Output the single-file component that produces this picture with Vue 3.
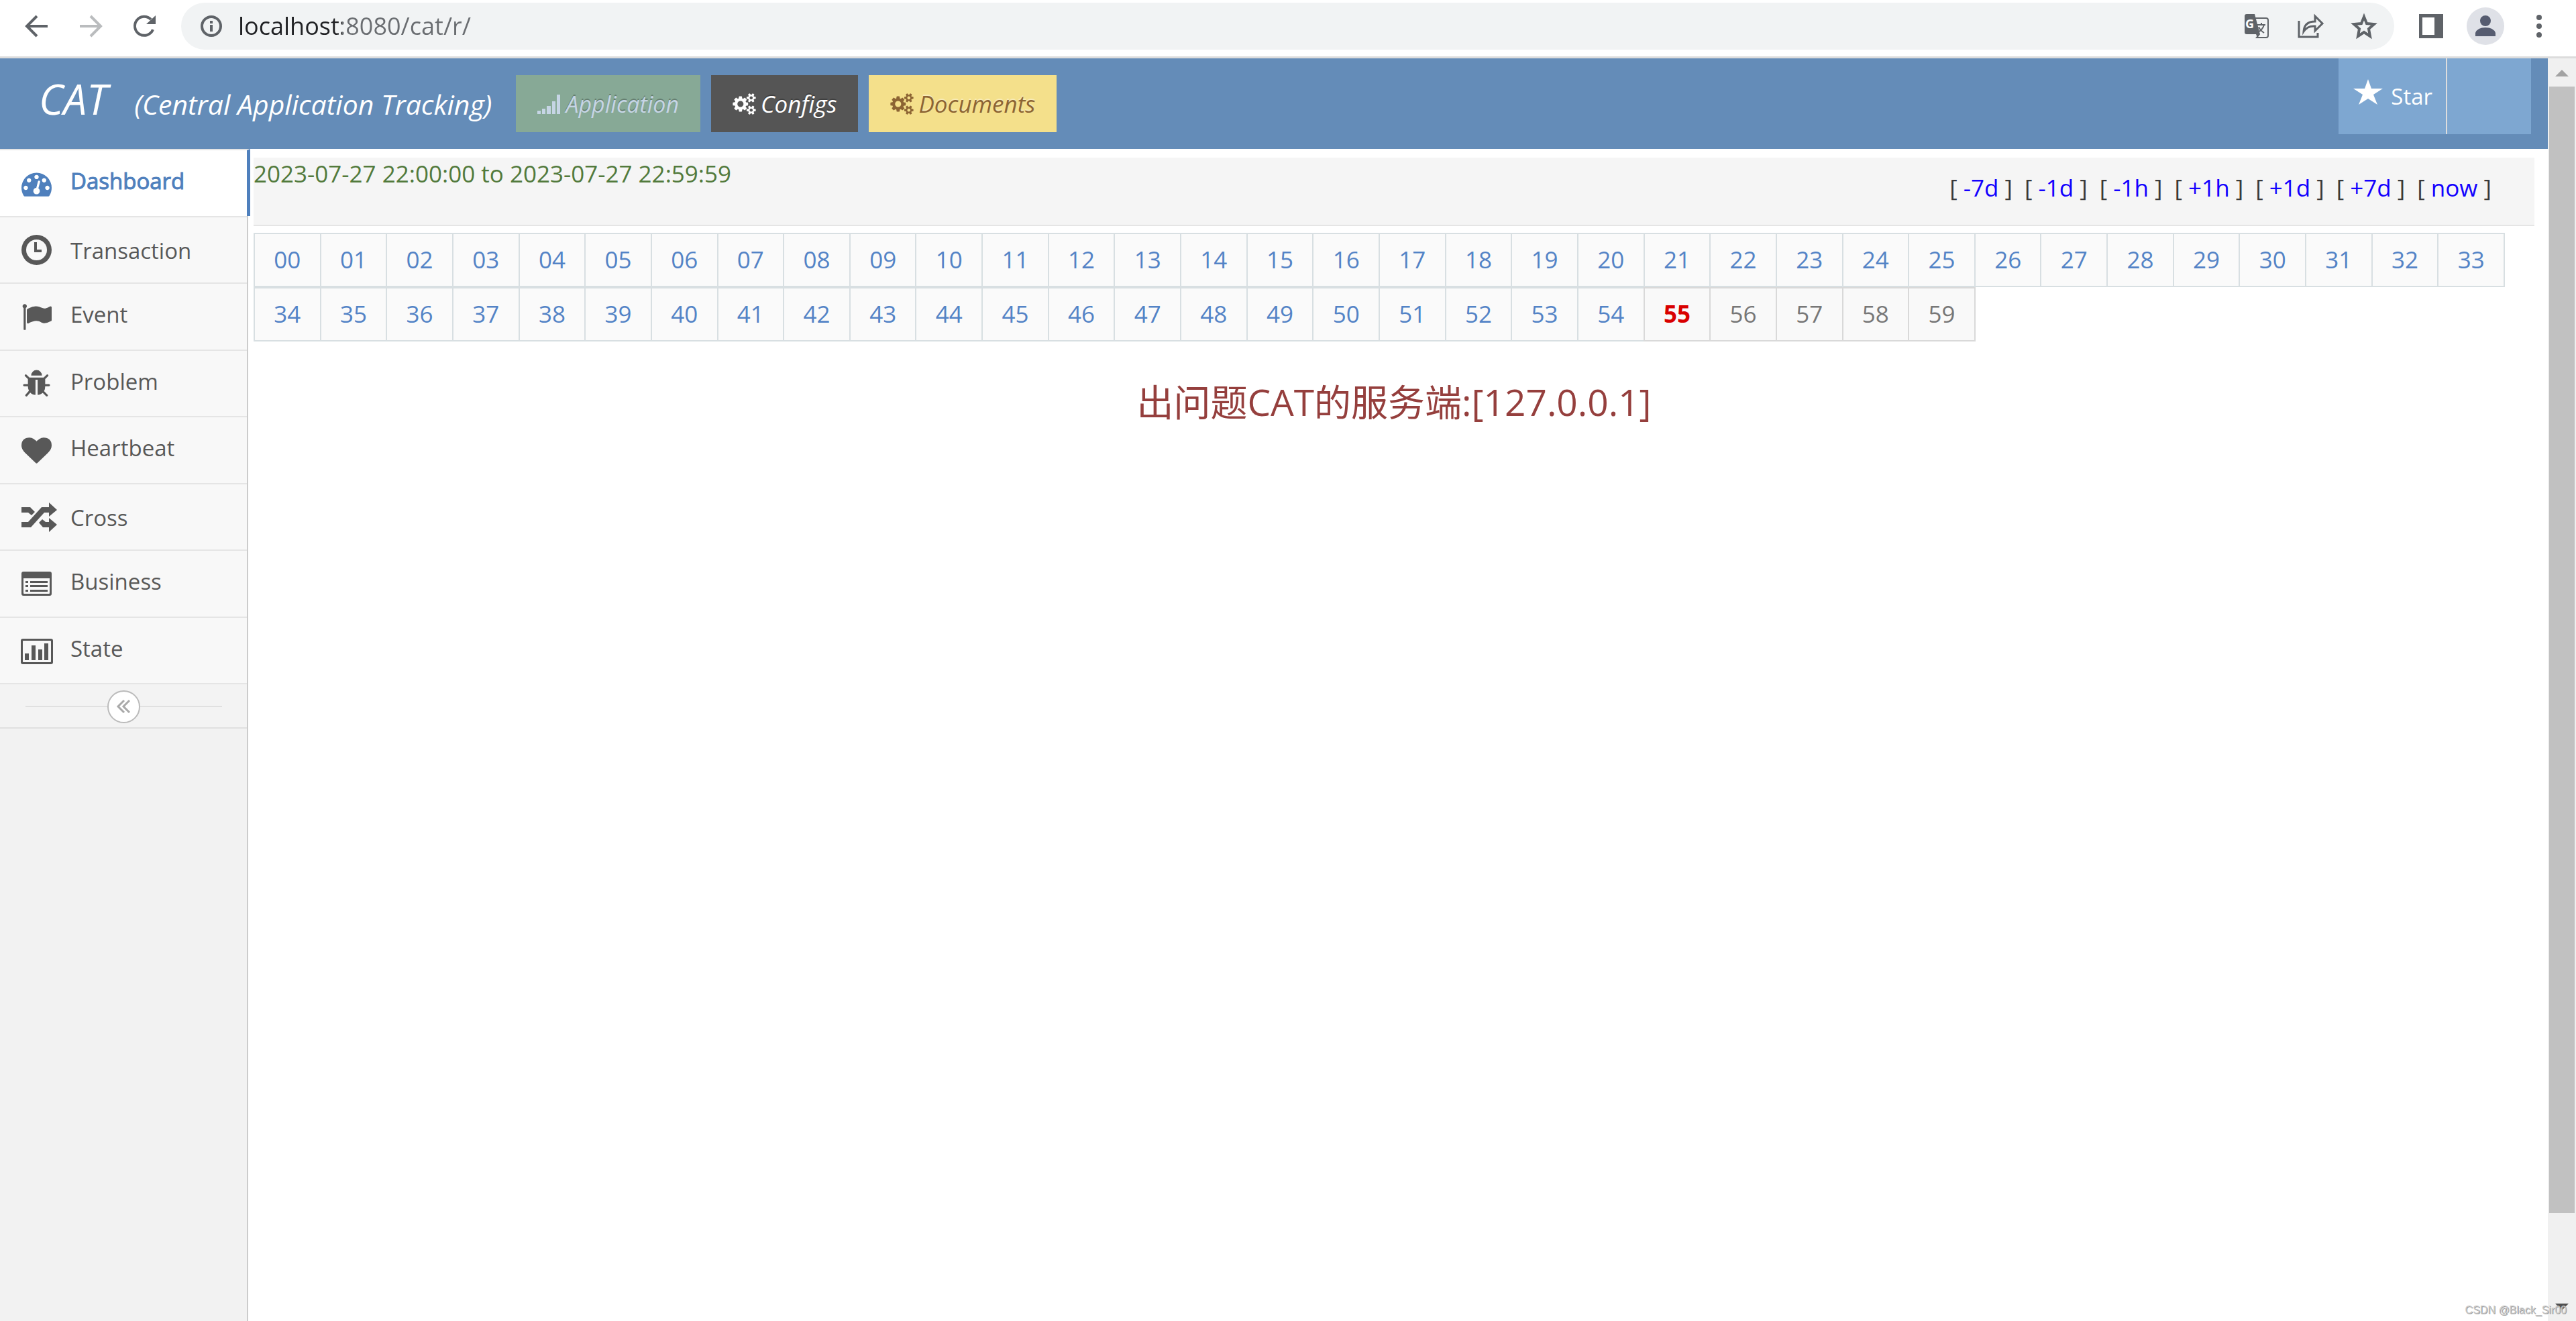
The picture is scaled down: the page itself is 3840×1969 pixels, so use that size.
<script setup>
import { ref } from 'vue'

const url = ref('localhost:8080/cat/r/')

const cogs = 'M896 896q0-106-75-181t-181-75-181 75-75 181 75 181 181 75 181-75 75-181zm768 512q0-52-38-90t-90-38-90 38-38 90q0 53 37.5 90.5t90.5 37.5 90.5-37.5 37.5-90.5zm0-1024q0-52-38-90t-90-38-90 38-38 90q0 53 37.5 90.5t90.5 37.5 90.5-37.5 37.5-90.5zm-384 421v185q0 10-7 19.5t-16 10.5l-155 24q-11 35-32 76 34 48 90 115 7 11 7 20 0 12-7 19-23 30-82.5 89.5t-78.5 59.5q-11 0-21-7l-115-90q-37 19-77 31-11 108-23 155-7 24-30 24h-186q-11 0-20-7.5t-10-17.5l-23-153q-34-10-75-31l-118 89q-7 7-20 7-11 0-21-8-144-133-144-160 0-9 7-19 10-14 41-53t47-61q-23-44-35-82l-152-24q-10-1-17-9.5t-7-19.5v-185q0-10 7-19.5t16-10.5l155-24q11-35 32-76-34-48-90-115-7-11-7-20 0-12 7-20 22-30 82-89t79-59q11 0 21 7l115 90q34-18 77-32 11-108 23-154 7-24 30-24h186q11 0 20 7.5t10 17.5l23 153q34 10 75 31l118-89q8-7 20-7 11 0 21 8 144 133 144 160 0 8-7 19-12 16-42 54t-45 60q23 48 34 82l152 23q10 2 17 10.5t7 19.5zm640 533v140q0 16-149 31-12 27-30 52 51 113 51 138 0 4-4 7-122 71-124 71-8 0-46-47t-52-68q-20 2-30 2t-30-2q-14 21-52 68t-46 47q-2 0-124-71-4-3-4-7 0-25 51-138-18-25-30-52-149-15-149-31v-140q0-16 149-31 13-29 30-52-51-113-51-138 0-4 4-7 4-2 35-20t59-34 30-16q8 0 46 46.5t52 67.5q20-2 30-2t30 2q51-71 92-112l6-2q4 0 124 70 4 3 4 7 0 25-51 138 17 23 30 52 149 15 149 31zm0-1024v140q0 16-149 31-12 27-30 52 51 113 51 138 0 4-4 7-122 71-124 71-8 0-46-47t-52-68q-20 2-30 2t-30-2q-14 21-52 68t-46 47q-2 0-124-71-4-3-4-7 0-25 51-138-18-25-30-52-149-15-149-31v-140q0-16 149-31 13-29 30-52-51-113-51-138 0-4 4-7 4-2 35-20t59-34 30-16q8 0 46 46.5t52 67.5q20-2 30-2t30 2q51-71 92-112l6-2q4 0 124 70 4 3 4 7 0 25-51 138 17 23 30 52 149 15 149 31z'

// box is the svg viewBox
const menu = [
  {
    name: 'Dashboard',
    active: true,
    box: '0 0 1792 1792',
    path: 'M384 1152q0-53-37.5-90.5t-90.5-37.5-90.5 37.5-37.5 90.5 37.5 90.5 90.5 37.5 90.5-37.5 37.5-90.5zm192-448q0-53-37.5-90.5t-90.5-37.5-90.5 37.5-37.5 90.5 37.5 90.5 90.5 37.5 90.5-37.5 37.5-90.5zm428 481l101-382q6-26-7.5-48.5t-38.5-29.5-48 6.5-30 39.5l-101 382q-60 5-107 43.5t-63 98.5q-20 77 20 146t117 89 146-20 89-117q16-60-6-117t-72-91zm660-33q0-53-37.5-90.5t-90.5-37.5-90.5 37.5-37.5 90.5 37.5 90.5 90.5 37.5 90.5-37.5 37.5-90.5zm-640-640q0-53-37.5-90.5t-90.5-37.5-90.5 37.5-37.5 90.5 37.5 90.5 90.5 37.5 90.5-37.5 37.5-90.5zm448 192q0-53-37.5-90.5t-90.5-37.5-90.5 37.5-37.5 90.5 37.5 90.5 90.5 37.5 90.5-37.5 37.5-90.5zm320 448q0 261-141 483-19 29-54 29h-1402q-35 0-54-29-141-221-141-483 0-182 71-348t191-286 286-191 348-71 348 71 286 191 191 286 71 348z'
  },
  {
    name: 'Transaction',
    glyph: true,
    box: '0 0 45 45',
    path: 'M22.500 0a22.500 22.500 0 1 0 0 45a22.500 22.500 0 1 0 0-45zM22.500 7a15.500 15.500 0 1 1 0 31a15.500 15.500 0 1 1 0-31zM19 11h4v11h7v4h-11z'
  },
  {
    name: 'Event',
    box: '0 0 1792 1792',
    path: 'M320 256q0 72-64 110v1266q0 13-9.5 22.5t-22.5 9.5h-64q-13 0-22.5-9.5t-9.5-22.5v-1266q-64-38-64-110 0-53 37.5-90.5t90.5-37.5 90.5 37.5 37.5 90.5zm1472 64v763q0 25-12.5 38.5t-39.5 27.5q-215 116-369 116-61 0-123.5-22t-108.5-48-115.5-48-142.5-22q-192 0-464 146-17 9-33 9-26 0-45-19t-19-45v-742q0-32 31-55 21-14 79-43 236-120 421-120 107 0 200 29t219 88q38 19 88 19 54 0 117.5-21t110-47 88-47 54.5-21q26 0 45 19t19 45z'
  },
  {
    name: 'Problem',
    box: '0 0 1792 1792',
    path: 'M1696 960q0 26-19 45t-45 19h-224q0 171-67 290l208 209q19 19 19 45t-19 45q-18 19-45 19t-45-19l-198-197q-5 5-15 13t-42 28.5-65 36.5-82 29-97 13v-896h-128v896q-51 0-101.5-13.5t-87-33-66-39-43.5-32.5l-15-14-183 207q-20 21-48 21-24 0-43-16-19-18-20.5-44.5t15.5-46.5l202-227q-58-114-58-274h-224q-26 0-45-19t-19-45 19-45 45-19h224v-294l-173-173q-19-19-19-45t19-45 45-19 45 19l173 173h844l173-173q19-19 45-19t45 19 19 45-19 45l-173 173v294h224q26 0 45 19t19 45zm-480-576h-640q0-133 93.5-226.5t226.5-93.5 226.5 93.5 93.5 226.5z'
  },
  {
    name: 'Heartbeat',
    box: '0 0 1792 1792',
    path: 'M896 1664q-26 0-44-18l-624-602q-10-8-27.5-26t-55.5-65.5-68-97.5-53.5-121-23.5-138q0-220 127-344t351-124q62 0 126.500 21.500t120 58 95.500 68.500 76 68q36-36 76-68t95.500-68.500 120-58 126.500-21.500q224 0 351 124t127 344q0 221-229 450l-623 600q-18 18-44 18z'
  },
  {
    name: 'Cross',
    glyph: true,
    box: '0 0 45 45',
    path: 'M0 8h13l7 7-5 5-5-4h-10zM0 30h10l20-22h11v-7l12 11-12 10v-6h-7l-20 22h-14zM26 31l5-5 5 4h5v-6l12 10-12 11v-7h-9z'
  },
  {
    name: 'Business',
    box: '0 0 45 45',
    path: 'M3 4h39q3 0 3 3v30q0 3-3 3h-39q-3 0-3-3v-30q0-3 3-3zM3 14v22q0 1 1 1h37q1 0 1-1v-22zM6 18h4v3h-4zM13 18h26v3h-26zM6 24h4v3h-4zM13 24h26v3h-26zM6 31h4v3h-4zM13 31h26v3h-26z'
  },
  {
    name: 'State',
    box: '0 0 45 45',
    path: 'M2 4h42q3 0 3 3v32q0 3-3 3h-42q-3 0-3-3v-32q0-3 3-3zM3 7q-1 0-1 1v30q0 1 1 1h40q1 0 1-1v-30q0-1-1-1zM5 26h6v10h-6zM15 14h6v22h-6zM25 20h6v16h-6zM34 11h6v25h-6z'
  }
]

const ranges = ['-7d', '-1d', '-1h', '+1h', '+1d', '+7d', 'now']

const current = 55
const minutes = Array.from({ length: 60 }, (_, i) => i)

const pad = (n) => String(n).padStart(2, '0')
</script>

<template>
  <div class="window">
    <!-- browser toolbar -->
    <header class="toolbar">
      <div class="nav-buttons">
        <button aria-label="Back">
          <svg viewBox="0 0 36 36" class="tool"><path d="M34 18H4M18 3L3 18l15 15" class="line" /></svg>
        </button>
        <button aria-label="Forward" class="off">
          <svg viewBox="0 0 36 36" class="tool"><path d="M2 18h30M18 3l15 15-15 15" class="line" /></svg>
        </button>
        <button aria-label="Reload">
          <svg viewBox="0 0 36 36" class="tool">
            <path d="M31 23a14 14 0 1 1-3-15" class="line" />
            <path d="M35 2v13H21z" />
          </svg>
        </button>
      </div>
      <div class="omnibox">
        <svg viewBox="0 0 36 36" class="tool">
          <circle cx="18" cy="18" r="14" class="line" />
          <path d="M16 16h4v10h-4zM16 10h4v4h-4z" />
        </svg>
        <input v-model="url" class="url" type="text" aria-label="Address" />
        <button aria-label="Translate">
          <svg viewBox="0 0 36 36" class="tool">
            <path d="M16 6h16q3 0 3 3v23q0 3-3 3H18l4-5" class="thin" />
            <path d="M3 0h12l8 30-4 5-2-5H3q-3 0-3-3V3q0-3 3-3z" />
            <path d="M19 16h12M25 13v3M29 16q-2 7-9 11M21 19q2 5 8 9" class="thin" />
            <text x="1" y="21" class="g">G</text>
          </svg>
        </button>
        <button aria-label="Share">
          <svg viewBox="0 0 36 36" class="tool">
            <path d="M1 10v24h28v-6" class="thin share" />
            <path d="M8 26q1-15 17-15V3l11 11-11 11v-7q-11-1-17 8z" class="thin share" />
          </svg>
        </button>
        <button aria-label="Bookmark">
          <svg viewBox="0 0 36 36" class="tool">
            <path d="M18 4l4 10 11 1-8 7 2 11-9-6-9 6 2-11-8-7 11-1z" class="line" />
          </svg>
        </button>
      </div>
      <div class="tools">
        <button aria-label="Side panel">
          <svg viewBox="0 0 36 36" class="tool"><path d="M0 0h36v36H0zM5 5v26h18V5z" fill-rule="evenodd" /></svg>
        </button>
        <button aria-label="Profile" class="avatar">
          <svg viewBox="0 0 56 56">
            <circle cx="28" cy="20" r="8" />
            <path d="M13 43v-5q3-8 15-8t15 8v5z" />
          </svg>
        </button>
        <button aria-label="Menu" class="more">
          <svg viewBox="0 0 8 36">
            <circle cx="4" cy="5" r="4" />
            <circle cx="4" cy="18" r="4" />
            <circle cx="4" cy="31" r="4" />
          </svg>
        </button>
      </div>
    </header>

    <div class="view">
      <div class="page">
        <nav class="navbar">
          <a href="#" class="brand">CAT <small>(Central Application Tracking)</small></a>
          <div class="buttons">
            <button class="btn btn-app">
              <svg viewBox="0 0 35 32" class="btn-icon"><path d="M0 26h5v5H0zM7 23h5v8H7zM14 19h6v12h-6zM22 12h5v19h-5zM29 2h5v29h-5z" /></svg>
              <span>Application</span>
            </button>
            <button class="btn btn-config">
              <svg viewBox="0 0 1920 1792" class="btn-icon"><path :d="cogs" /></svg>
              <span>Configs</span>
            </button>
            <button class="btn btn-doc">
              <svg viewBox="0 0 1920 1792" class="btn-icon"><path :d="cogs" /></svg>
              <span>Documents</span>
            </button>
          </div>
          <div class="user">
            <a href="#" class="star">
              <svg viewBox="0 0 44 38"><path d="M22 0l5 14h17L30 23l6 15-14-9-14 9 6-15L0 14h17z" /></svg>
              <span>Star</span>
            </a>
            <a href="#" class="login" aria-label="Login"></a>
          </div>
        </nav>

        <div class="container">
          <aside class="sidebar">
            <ul class="menu">
              <li v-for="item in menu" :key="item.name" :class="{ active: item.active }">
                <a href="#" :class="{ glyph: item.glyph }">
                  <svg :viewBox="item.box" class="menu-icon"><path :d="item.path" fill-rule="evenodd" /></svg>
                  <span>{{ item.name }}</span>
                </a>
              </li>
            </ul>
            <div class="collapse">
              <button aria-label="Collapse menu">
                <svg viewBox="0 0 20 20"><path d="M10 1L1 10l9 9M18 1l-9 9 9 9" /></svg>
              </button>
            </div>
          </aside>

          <main class="main">
            <div class="crumbs">
              <span class="period">2023-07-27 22:00:00 to 2023-07-27 22:59:59</span>
              <div class="ranges">
                <span v-for="r in ranges" :key="r">[ <a href="#">{{ r }}</a> ]</span>
              </div>
            </div>
            <div class="minutes">
              <a
                v-for="m in minutes"
                :key="m"
                href="#"
                :class="{ current: m === current, disabled: m >= current }"
              >{{ pad(m) }}</a>
            </div>
            <h3 class="error">出问题CAT的服务端:[127.0.0.1]</h3>
          </main>
        </div>
      </div>

      <div class="scrollbar">
        <svg viewBox="0 0 42 42" class="arrow"><path d="M11 27l10-10 10 10z" /></svg>
        <div class="track"><div class="thumb"></div></div>
        <svg viewBox="0 0 42 42" class="arrow down"><path d="M11 16l10 10 10-10z" /></svg>
      </div>
    </div>
    <div class="watermark">CSDN @Black_Sir00</div>
  </div>
</template>

<style>
body {
  margin: 0;
}
</style>

<style scoped>
.window {
  position: relative;
  display: flex;
  flex-direction: column;
  min-height: 100vh;
  background: #fff;
  color: #393939;
  font-family: "Open Sans", "Noto Sans CJK SC", sans-serif;
  font-size: 35px;
  line-height: 48px;
}

a {
  color: inherit;
  text-decoration: none;
}

button {
  padding: 0;
  border: 0;
  background: none;
  color: inherit;
  font: inherit;
  cursor: pointer;
}

svg {
  display: block;
  flex: none;
  fill: currentColor;
  overflow: visible;
}

/* browser toolbar */
.toolbar {
  display: flex;
  align-items: center;
  padding: 4px 51px 10px 37px;
  border-bottom: 3px solid #dcdcdc;
  color: #5f6368;
}

.nav-buttons {
  display: flex;
  gap: 44px;
  margin-right: 37px;
}

.off {
  color: #babcbe;
}

.tool {
  width: 36px;
  height: 36px;
}

.line {
  fill: none;
  stroke: currentColor;
  stroke-width: 4;
}

.thin {
  fill: none;
  stroke: currentColor;
  stroke-width: 2;
}

.share {
  stroke-width: 3;
}

.omnibox {
  display: flex;
  flex: 1;
  align-items: center;
  gap: 44px;
  height: 70px;
  padding: 0 27px;
  border-radius: 35px;
  background: #f1f3f4;
}

.url {
  flex: 1;
  margin-left: -22px;
  padding: 0;
  border: 0;
  outline: 0;
  background: linear-gradient(to right, #202124 155px, #6a6d71 155px);
  background-clip: text;
  -webkit-text-fill-color: transparent;
  font: inherit;
  font-size: 36px;
}

.g {
  fill: #fff;
  font-size: 18px;
  font-weight: 700;
}

.tools {
  display: flex;
  align-items: center;
  margin-left: 37px;
}

.avatar {
  width: 56px;
  height: 56px;
  margin: 0 48px 0 35px;
  border-radius: 50%;
  background: #dfe1e7;
  color: #565c70;
}

.more svg {
  width: 8px;
  height: 36px;
}

/* page */
.view {
  display: flex;
  flex: 1;
}

.page {
  display: flex;
  flex: 1;
  flex-direction: column;
}

.navbar {
  display: flex;
  align-items: center;
  height: 135px;
  padding: 0 25px 0 58px;
  background: #648cb8;
  color: #fff;
}

.brand {
  margin-bottom: 8px;
  font-size: 62px;
  font-style: italic;
  line-height: 80px;
}

.brand small {
  margin-left: 24px;
  font-size: 41px;
}

.buttons {
  display: flex;
  gap: 16px;
  margin-left: 36px;
}

.btn {
  display: flex;
  align-items: center;
  gap: 7px;
  height: 85px;
  padding: 0 32px;
  font-style: italic;
  text-shadow: 0 -2px 0 rgba(0, 0, 0, 0.25);
}

.btn-icon {
  width: 35px;
  height: 32px;
}

.btn-app {
  background: #87a996;
  color: #c6d5e5;
  font-size: 34px;
}

.btn-config {
  background: #555;
}

.btn-doc {
  background: #f4e08b;
  color: #8c6433;
  text-shadow: 0 -2px 0 rgba(255, 255, 255, 0.4);
}

.user {
  display: flex;
  align-self: flex-start;
  height: 113px;
  margin-left: auto;
  font-size: 33px;
}

.user a {
  background: #7ea7d1;
}

.star {
  display: flex;
  align-items: center;
  gap: 12px;
  padding: 0 20px 0 22px;
  border-right: 2px solid #ddd;
}

.star svg {
  width: 44px;
  height: 38px;
  margin-bottom: 14px;
}

.login {
  width: 125px;
}

.container {
  display: flex;
  flex: 1;
}

/* sidebar */
.sidebar {
  flex: none;
  width: 368px;
  border-right: 2px solid #ccc;
  background: #f2f2f2;
  color: #585858;
  font-size: 33px;
}

.menu {
  display: flex;
  flex-direction: column;
  height: 796px;
  margin: 0;
  padding: 0;
  border-bottom: 2px solid #e5e5e5;
  list-style: none;
}

.menu li {
  flex: 1;
  border-top: 2px solid #e5e5e5;
  background: #f8f8f8;
}

.menu .active {
  margin-right: -5px;
  border-right: 5px solid #4f80bd;
  background: #fff;
  color: #4f80bd;
  -webkit-text-stroke: 1px;
}

.menu a {
  display: flex;
  gap: 28px;
  padding: 22px 32px;
}

.menu .glyph {
  padding-top: 26px;
}

.menu-icon {
  width: 45px;
  height: 45px;
  margin-top: 5px;
}

.glyph .menu-icon {
  margin-top: 0;
}

.collapse {
  display: flex;
  align-items: center;
  height: 62px;
  padding: 2px 37px 0 38px;
  border-bottom: 2px solid #e0e0e0;
  background: #f3f3f3;
}

.collapse::before,
.collapse::after {
  flex: 1;
  height: 2px;
  background: #e0e0e0;
  content: "";
}

.collapse button {
  display: grid;
  place-items: center;
  width: 49px;
  height: 49px;
  border: 2px solid #bbb;
  border-radius: 50%;
  background: #fff;
  color: #aaa;
}

.collapse svg {
  width: 20px;
  height: 20px;
  fill: none;
  stroke: currentColor;
  stroke-width: 3;
}

/* content */
.main {
  flex: 1;
  padding: 13px 20px 0 8px;
}

.crumbs {
  display: flex;
  justify-content: space-between;
  height: 100px;
  border-bottom: 2px solid #e5e5e5;
  background: #f5f5f5;
}

.period {
  color: #527a3c;
}

.ranges {
  display: flex;
  gap: 18px;
  padding: 21px 64px 0 0;
}

.ranges a {
  color: #1200ff;
}

.minutes {
  display: grid;
  grid-template-columns: repeat(34, 1fr);
  margin: 10px 44px 0 0;
  padding-right: 2px;
}

.minutes a {
  height: 77px;
  margin-right: -2px;
  border: 2px solid #d8dfe2;
  background: #fafafa;
  color: #5383c6;
  line-height: 75px;
  text-align: center;
}

.minutes .disabled {
  border-color: #d9d9d9;
  background: #f9f9f9;
  color: #777;
}

.minutes .current {
  color: #d90000;
  font-weight: 700;
}

.error {
  margin: 50px 0 0;
  color: #953f3d;
  font-size: 55px;
  font-weight: 400;
  line-height: 80px;
  text-align: center;
}

.scrollbar {
  display: flex;
  flex: none;
  flex-direction: column;
  width: 42px;
  background: #f0f0f0;
  color: #a3a3a3;
}

.arrow {
  width: 42px;
  height: 42px;
}

.down {
  color: #505050;
}

.track {
  flex: 1;
  display: flex;
  padding: 0 2px;
}

.thumb {
  flex: 1;
  height: 93.4%;
  background: #c1c1c1;
}

.watermark {
  position: absolute;
  right: 14px;
  bottom: 6px;
  color: #c8c8c8;
  font-family: "Liberation Sans", Arial, sans-serif;
  font-size: 16px;
  line-height: 20px;
  text-shadow: 1px 1px 0 #999;
}
</style>
